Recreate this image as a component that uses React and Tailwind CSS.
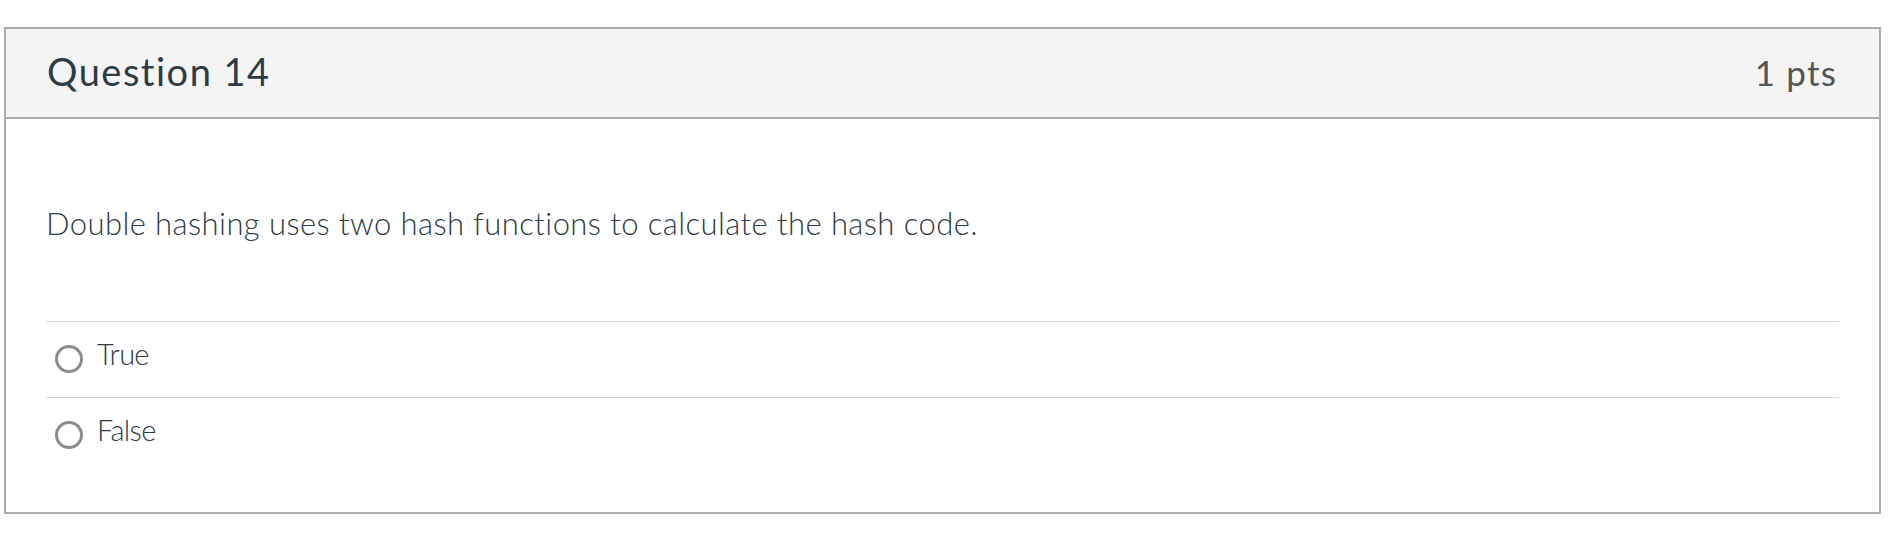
export default function App() {
  const font = { fontFamily: 'Lato, "Open Sans", sans-serif' };
  return (
    <div className="w-full h-[539px] bg-white pt-[27px]" style={font}>
      <div className="ml-[4px] w-[1877px] border-2 border-[#ababab] bg-white">
        <div className="h-[90px] bg-[#f4f4f4] border-b-2 border-[#ababab] flex items-center justify-between pl-[41px] pr-[42px] pb-[2px]">
          <div className="text-[38px] leading-[1.2] text-[#2d3b45] font-normal tracking-[1.5px]">Question 14</div>
          <div className="text-[35px] leading-[1.2] text-[#545454] font-normal tracking-[1.2px]">1 pts</div>
        </div>
        <div className="px-[40px] pt-[86px] pb-[39px]">
          <div className="text-[31px] leading-[1.2] font-light text-[#2d3b45] tracking-[0.42px]">
            Double hashing uses two hash functions to calculate the hash code.
          </div>
          <div className="mt-[79px]">
            {["True", "False"].map((label) => (
              <div key={label} className="border-t border-[#d6d6d6] h-[76px] pt-[15px] pl-[9px] flex items-start">
                <div className="mt-[8px] w-[28px] h-[28px] rounded-full border-[3px] border-[#8c8c8c] shrink-0" />
                <div className="ml-[14px] text-[29px] leading-[1.2] font-light text-[#2d3b45] tracking-[-0.7px]">{label}</div>
              </div>
            ))}
          </div>
        </div>
      </div>
    </div>
  );
}
